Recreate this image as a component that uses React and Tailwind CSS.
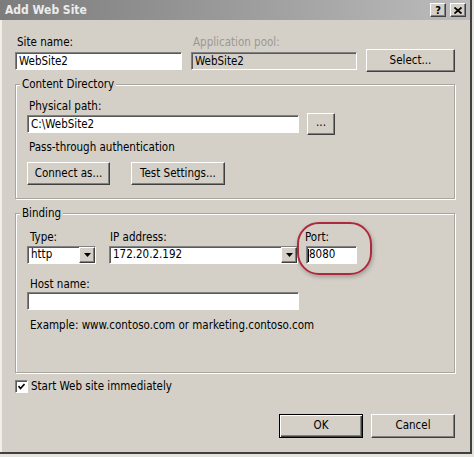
const raised =
  "border border-t-white border-l-white border-r-[#404040] border-b-[#404040] shadow-[inset_-1px_-1px_0_#808080] bg-[#d4d0c8]";
const sunken =
  "border border-t-[#808080] border-l-[#808080] border-r-white border-b-white shadow-[inset_1px_1px_0_#5a5a5a]";
const group =
  "relative border border-[#a8a59e] shadow-[inset_1px_1px_0_#fff,1px_1px_0_#fff]";

function Btn({ className = "", children }) {
  return (
    <div className={`${raised} flex items-center justify-center leading-none ${className}`}>
      {children}
    </div>
  );
}

function Combo({ className = "", value }) {
  return (
    <div className={`${sunken} bg-white flex items-center h-[18px] ${className}`}>
      <span className="flex-1 pl-[3px] leading-none">{value}</span>
      <div className={`${raised} w-[16px] h-[16px] flex items-center justify-center`}>
        <svg width="7" height="4" viewBox="0 0 7 4">
          <polygon points="0,0 7,0 3.5,4" fill="#000" />
        </svg>
      </div>
    </div>
  );
}

export default function App() {
  return (
    <div className="w-[474px] h-[457px] bg-[#e6e4de] font-['DejaVu_Sans_Condensed','DejaVu_Sans',sans-serif] text-[11.5px] text-black">
      <div className="relative w-[472px] h-[454px] bg-[#d4d0c8] border-r-2 border-b-2 border-[#404040] shadow-[inset_2px_0_0_#f1efea]">
        {/* title bar */}
        <div className="h-[20px] flex items-center justify-between pl-[5px] pr-[4px] bg-linear-to-r from-[#7c7c7c] to-[#bcbcbc]">
          <span className="font-bold text-[12px] text-[#ececec]">Add Web Site</span>
          <div className="flex gap-[4px]">
            <Btn className="w-[16px] h-[14px] font-bold text-[11px]">?</Btn>
            <Btn className="w-[16px] h-[14px]">
              <svg width="8" height="7" viewBox="0 0 8 7">
                <line x1="0.5" y1="0.5" x2="7.5" y2="6.5" stroke="#000" strokeWidth="1.8" />
                <line x1="7.5" y1="0.5" x2="0.5" y2="6.5" stroke="#000" strokeWidth="1.8" />
              </svg>
            </Btn>
          </div>
        </div>

        <div className="px-[15px]">
          {/* site name / app pool */}
          <div className="flex mt-[15px] h-[14px] leading-[14px]">
            <span className="w-[176px] pl-[2px]">Site name:</span>
            <span className="pl-[2px] text-[#9c9991]">Application pool:</span>
          </div>
          <div className="flex items-center h-[23px]">
            <div className={`${sunken} bg-white w-[167px] h-[18px] pl-[3px] leading-[16px]`}>WebSite2</div>
            <div className={`${sunken} ml-[9px] w-[166px] h-[18px] pl-[3px] leading-[16px]`}>WebSite2</div>
            <Btn className="ml-[9px] w-[89px] h-[23px]">Select...</Btn>
          </div>

          {/* content directory */}
          <div className={`${group} mt-[12px] h-[115px] pl-[11px] pt-[14px]`}>
            <span className="absolute left-[4px] -top-[8px] px-[2px] bg-[#d4d0c8] leading-[14px]">
              Content Directory
            </span>
            <div className="ml-[2px] leading-[14px]">Physical path:</div>
            <div className="flex items-center h-[22px]">
              <div className={`${sunken} bg-white w-[272px] h-[18px] pl-[3px] leading-[16px]`}>C:\WebSite2</div>
              <Btn className="ml-[8px] w-[28px] h-[22px] pb-[2px]">...</Btn>
            </div>
            <div className="mt-[5px] ml-[2px] leading-[14px]">Pass-through authentication</div>
            <div className="mt-[8px] flex gap-[21px]">
              <Btn className="w-[83px] h-[23px]">Connect as...</Btn>
              <Btn className="w-[94px] h-[23px]">Test Settings...</Btn>
            </div>
          </div>

          {/* binding */}
          <div className={`${group} mt-[14px] h-[160px] pl-[11px] pt-[16px]`}>
            <span className="absolute left-[4px] -top-[8px] px-[2px] bg-[#d4d0c8] leading-[14px]">
              Binding
            </span>
            <div className="flex h-[14px] leading-[14px]">
              <span className="w-[82px] pl-[3px]">Type:</span>
              <span className="w-[196px] pl-[1px]">IP address:</span>
              <span>Port:</span>
            </div>
            <div className="mt-[2px] flex">
              <Combo className="w-[69px]" value="http" />
              <Combo className="ml-[13px] w-[189px]" value="172.20.2.192" />
              <div className={`${sunken} bg-white ml-[8px] w-[51px] h-[18px] flex items-center pl-[1px]`}>
                <span className="w-px h-[13px] bg-black" />
                <span className="leading-none">8080</span>
              </div>
            </div>
            <div className="mt-[13px] pl-[3px] leading-[14px]">Host name:</div>
            <div className={`${sunken} bg-white mt-[1px] w-[272px] h-[18px]`} />
            <div className="mt-[8px] pl-[3px] leading-[14px]">
              Example: www.contoso.com or marketing.contoso.com
            </div>
          </div>

          {/* start checkbox */}
          <div className="mt-[6px] flex items-center h-[14px]">
            <div className={`${sunken} bg-white w-[13px] h-[13px] flex items-center justify-center`}>
              <svg width="7" height="7" viewBox="0 0 7 7">
                <polyline points="0.5,3 2.5,5.5 6.5,1" fill="none" stroke="#000" strokeWidth="1.6" />
              </svg>
            </div>
            <span className="ml-[3px] leading-[14px]">Start Web site immediately</span>
          </div>

          {/* ok / cancel */}
          <div className="mt-[21px] flex justify-end gap-[8px]">
            <div className="w-[84px] h-[24px] border border-black bg-[#d4d0c8] shadow-[inset_1px_1px_0_#fff,inset_-1px_-1px_0_#404040,inset_-2px_-2px_0_#808080] flex items-center justify-center leading-none">
              OK
            </div>
            <Btn className="w-[84px] h-[24px]">Cancel</Btn>
          </div>
        </div>

        {/* highlight ring round the port field */}
        <div className="absolute left-[297px] top-[222px] w-[75px] h-[53px] rounded-[22px] border-2 border-[#ad2a3c] shadow-[1px_2px_4px_rgba(0,0,0,0.25)]" />
      </div>
    </div>
  );
}
